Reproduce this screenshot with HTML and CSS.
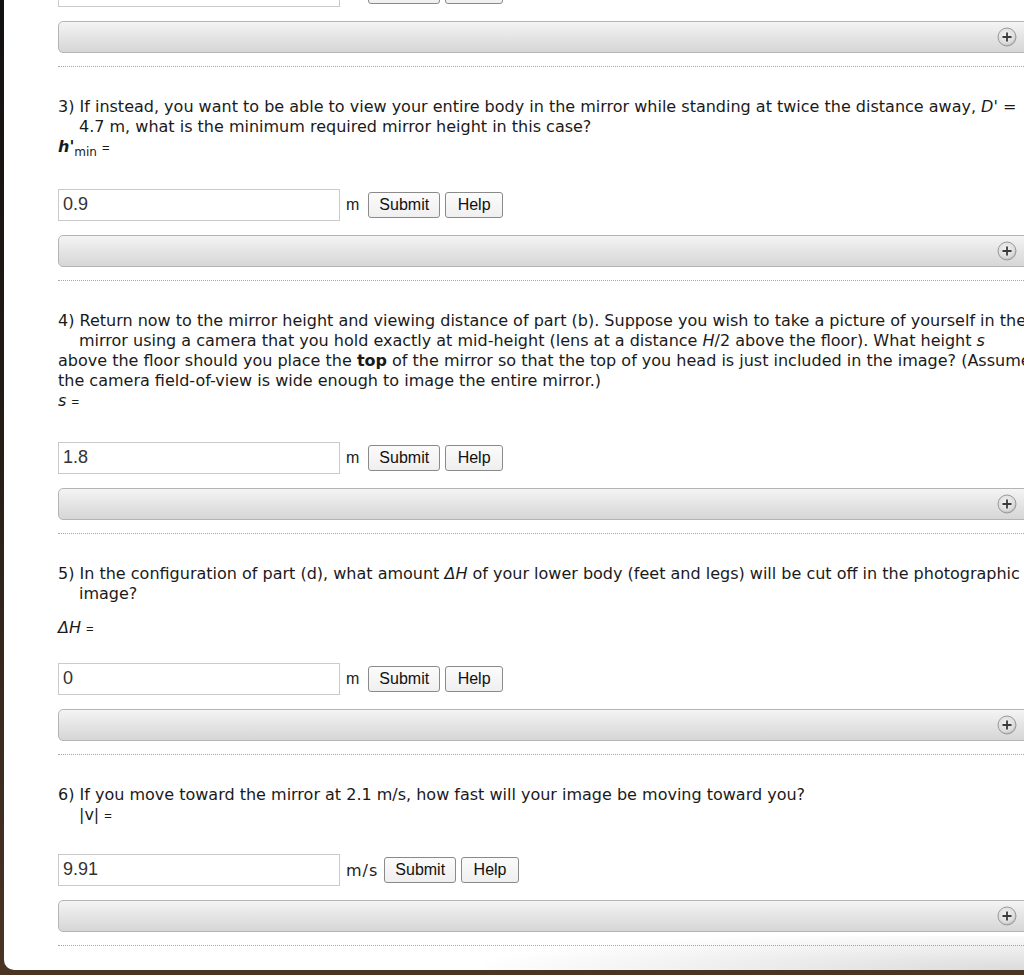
FILE: index.html
```html
<!DOCTYPE html>
<html>
<head>
<meta charset="utf-8">
<link rel="stylesheet" href="styles.css">
</head>
<body>
<div class="window">
  <div class="content">

    <section class="q q-prev">
      <div class="answer">
        <div class="field"></div>
        <span class="unit">m</span>
        <span class="btn">Submit</span>
        <span class="btn btn-help">Help</span>
      </div>
      <div class="feedback">
        <svg class="plus" width="20" height="20" viewBox="0 0 20 20"><defs><radialGradient id="pg" cx="45%" cy="40%" r="65%"><stop offset="0" stop-color="#f4f4f4"/><stop offset="0.7" stop-color="#dcdcdc"/><stop offset="1" stop-color="#a9a9a9"/></radialGradient></defs><circle cx="10" cy="10" r="9" fill="url(#pg)" stroke="#9a9a9a" stroke-width="1"/><path d="M10 5.5v9M5.5 10h9" stroke="#3a3a3a" stroke-width="1.8"/></svg>
      </div>
    </section>

    <section class="q q3">
      <div class="qtext">
        <div class="hang">3) If instead, you want to be able to view your entire body in the mirror while standing at twice the distance away, <i>D'</i> =<br>4.7 m, what is the minimum required mirror height in this case?</div>
        <div class="label"><i class="hvar">h'</i><sub>min</sub> <span class="eq">=</span></div>
      </div>
      <div class="answer">
        <div class="field">0.9</div>
        <span class="unit">m</span>
        <span class="btn">Submit</span>
        <span class="btn btn-help">Help</span>
      </div>
      <div class="feedback">
        <svg class="plus" width="20" height="20" viewBox="0 0 20 20"><circle cx="10" cy="10" r="9" fill="url(#pg)" stroke="#9a9a9a" stroke-width="1"/><path d="M10 5.5v9M5.5 10h9" stroke="#3a3a3a" stroke-width="1.8"/></svg>
      </div>
    </section>

    <section class="q q4">
      <div class="qtext">
        <div class="hang">4) Return now to the mirror height and viewing distance of part (b). Suppose you wish to take a picture of yourself in the<br>mirror using a camera that you hold exactly at mid-height (lens at a distance <i>H</i>/2 above the floor). What height <i>s</i></div>
        <div>above the floor should you place the <b>top</b> of the mirror so that the top of you head is just included in the image? (Assume<br>the camera field-of-view is wide enough to image the entire mirror.)</div>
        <div class="label"><i>s</i> <span class="eq">=</span></div>
      </div>
      <div class="answer">
        <div class="field">1.8</div>
        <span class="unit">m</span>
        <span class="btn">Submit</span>
        <span class="btn btn-help">Help</span>
      </div>
      <div class="feedback">
        <svg class="plus" width="20" height="20" viewBox="0 0 20 20"><circle cx="10" cy="10" r="9" fill="url(#pg)" stroke="#9a9a9a" stroke-width="1"/><path d="M10 5.5v9M5.5 10h9" stroke="#3a3a3a" stroke-width="1.8"/></svg>
      </div>
    </section>

    <section class="q q5">
      <div class="qtext">
        <div class="hang">5) In the configuration of part (d), what amount <i>ΔH</i> of your lower body (feet and legs) will be cut off in the photographic<br>image?</div>
        <div class="label label-gap"><i>ΔH</i> <span class="eq">=</span></div>
      </div>
      <div class="answer">
        <div class="field">0</div>
        <span class="unit">m</span>
        <span class="btn">Submit</span>
        <span class="btn btn-help">Help</span>
      </div>
      <div class="feedback">
        <svg class="plus" width="20" height="20" viewBox="0 0 20 20"><circle cx="10" cy="10" r="9" fill="url(#pg)" stroke="#9a9a9a" stroke-width="1"/><path d="M10 5.5v9M5.5 10h9" stroke="#3a3a3a" stroke-width="1.8"/></svg>
      </div>
    </section>

    <section class="q q6">
      <div class="qtext">
        <div class="hang">6) If you move toward the mirror at 2.1 m/s, how fast will your image be moving toward you?<br>|v| <span class="eq">=</span></div>
      </div>
      <div class="answer">
        <div class="field">9.91</div>
        <span class="unit unit-text">m/s</span>
        <span class="btn">Submit</span>
        <span class="btn btn-help">Help</span>
      </div>
      <div class="feedback">
        <svg class="plus" width="20" height="20" viewBox="0 0 20 20"><circle cx="10" cy="10" r="9" fill="url(#pg)" stroke="#9a9a9a" stroke-width="1"/><path d="M10 5.5v9M5.5 10h9" stroke="#3a3a3a" stroke-width="1.8"/></svg>
      </div>
    </section>

  </div>
  <div class="shade"></div>
</div>
</body>
</html>
```

FILE: styles.css
```css
html, body {
  margin: 0;
  padding: 0;
  overflow: hidden;
}

body {
  width: 1024px;
  height: 975px;
  background: linear-gradient(180deg, #121010 0%, #221a15 40%, #3b2a1e 75%, #4a3424 100%);
  font-family: "DejaVu Sans", Verdana, sans-serif;
}

.window {
  margin-left: 4px;
  height: 970px;
  background: #ffffff;
  border-bottom-left-radius: 10px;
  overflow: hidden;
  position: relative;
}

.content {
  margin-top: -25px;
  padding-left: 54px;
  width: 1000px;
}

.q {
  border-bottom: 1px dotted #a8a8a8;
  padding: 30px 0 13px;
}

.q-prev {
  padding-top: 0;
}

.qtext {
  font-size: 16px;
  line-height: 20px;
  color: #1a1a1a;
  white-space: nowrap;
}

.hang {
  padding-left: 21px;
  text-indent: -21px;
}

.label sub {
  font-size: 12px;
  line-height: 0;
  vertical-align: -4px;
}

.hvar {
  font-weight: bold;
}

.eq {
  font-family: "Liberation Sans", Arial, sans-serif;
  font-size: 13px;
}

.label-gap {
  margin-top: 14px;
}

.answer {
  display: flex;
  align-items: center;
  height: 32px;
}

.q3 .answer { margin-top: 31px; }
.q4 .answer { margin-top: 30px; }
.q5 .answer { margin-top: 24px; }
.q6 .answer { margin-top: 28px; }

.field {
  width: 282px;
  height: 32px;
  box-sizing: border-box;
  border: 1px solid #cacaca;
  padding: 0 4px;
  font-family: "Liberation Sans", Arial, sans-serif;
  font-size: 18px;
  line-height: 28px;
  color: #333333;
  background: #ffffff;
}

.unit {
  margin: 0 9px 0 6px;
  font-family: "Liberation Sans", Arial, sans-serif;
  font-size: 16px;
  color: #222222;
}

.unit-text {
  font-family: "DejaVu Sans", Verdana, sans-serif;
  font-size: 16px;
  letter-spacing: 1px;
  margin-right: 6px;
}

.btn {
  box-sizing: border-box;
  height: 26px;
  padding: 0 10px;
  margin-right: 5px;
  border: 1px solid #8a8a8a;
  border-radius: 3px;
  background: linear-gradient(180deg, #fbfbfb 0%, #efefef 100%);
  font-family: "Liberation Sans", Arial, sans-serif;
  font-size: 16px;
  line-height: 24px;
  color: #111111;
}

.btn-help {
  padding: 0 11.5px;
}

.feedback {
  margin-top: 14px;
  height: 32px;
  box-sizing: border-box;
  border: 1px solid #b4b4b4;
  border-radius: 5px;
  background: linear-gradient(180deg, #f4f4f4 0%, #e6e6e6 45%, #d6d6d6 100%);
  display: flex;
  align-items: center;
  justify-content: flex-end;
  padding-right: 40px;
}

.plus {
  display: block;
}

.shade {
  position: absolute;
  left: 480px;
  right: 0;
  bottom: 0;
  height: 34px;
  background: radial-gradient(ellipse 560px 40px at 100% 100%, rgba(0, 0, 0, 0.14), rgba(0, 0, 0, 0) 100%);
  pointer-events: none;
}
```
